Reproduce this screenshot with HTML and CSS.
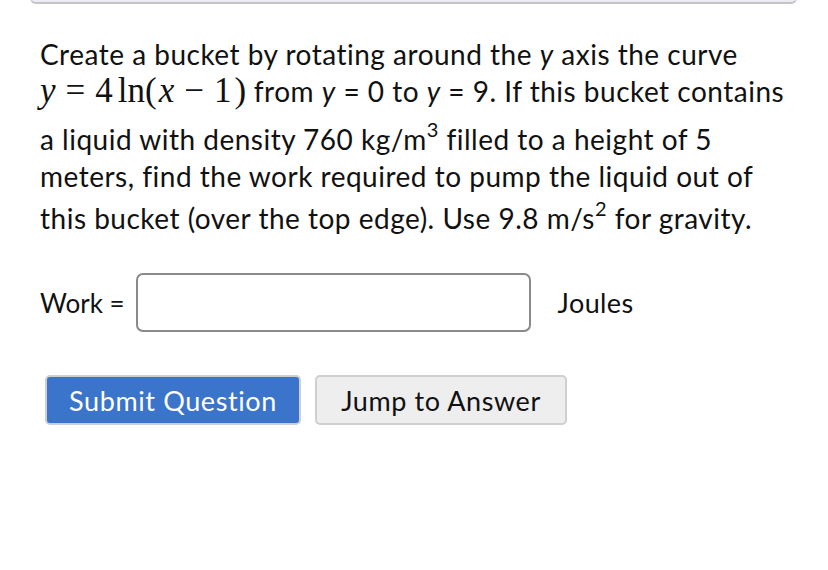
FILE: index.html
```html
<!DOCTYPE html>
<html>
<head>
<meta charset="utf-8">
<link rel="stylesheet" href="styles.css">
</head>
<body>
<div class="page">
  <div class="topbox"></div>
  <div class="question">
    <p class="prompt">Create a bucket by rotating around the <i>y</i> axis the curve <span class="math"><i>y</i><span class="op">=</span>4<span class="fn">ln</span>(<i class="mx">x</i><span class="op">&minus;</span>1<span class="rp">)</span></span> from <i>y</i> = 0 to <i>y</i> = 9. If this bucket contains a liquid with density 760 kg/m<sup>3</sup> filled to a height of 5 meters, find the work required to pump the liquid out of this bucket (over the top edge). Use 9.8 m/s<sup>2</sup> for gravity.</p>
    <div class="answer-row">
      <label class="label" for="work">Work =</label>
      <input class="field" id="work" type="text">
      <span class="unit">Joules</span>
    </div>
    <div class="buttons">
      <button class="btn btn-primary" type="button">Submit Question</button>
      <button class="btn btn-secondary" type="button">Jump to Answer</button>
    </div>
  </div>
</div>
</body>
</html>
```

FILE: styles.css
```css
html, body {
  margin: 0;
  padding: 0;
  background: #ffffff;
}
body {
  font-family: "Lato", "Open Sans", sans-serif;
  color: #111;
  font-variant-ligatures: none;
}
.page {
  width: 828px;
  height: 570px;
  overflow: hidden;
}
.topbox {
  margin: -20px 31px 0 30px;
  height: 22px;
  background: #ececf4;
  border: 1px solid #c8c8c8;
  border-top: none;
  border-bottom: 2px solid #c4c4c4;
  border-radius: 0 0 6px 6px;
}
.question {
  padding: 0 34px 0 40px;
}
.prompt {
  margin: 32px 0 0 0;
  font-size: 28px;
  letter-spacing: 0.5px;
  line-height: 37px;
}
.prompt i {
  font-style: italic;
}
.prompt sup {
  font-size: 20px;
  line-height: 26px;
  vertical-align: 13px;
}
.math {
  display: inline-block;
  font-family: "Liberation Serif", "DejaVu Serif", serif;
  font-size: 35px;
  letter-spacing: 0;
  white-space: nowrap;
  line-height: 35px;
  padding-bottom: 8px;
}
.math i {
  font-style: italic;
}
.math .op {
  margin: 0 10px;
}
.math .fn {
  margin-left: 5px;
}
.math .mx {
  margin-left: 2px;
}
.math .rp {
  margin-left: 3px;
}
.answer-row {
  display: flex;
  align-items: center;
  margin-top: 36px;
  font-size: 27px;
  letter-spacing: 0.4px;
}
.label {
  font-size: 26px;
  letter-spacing: 0;
  margin-right: 11px;
}
.field {
  width: 395px;
  height: 59px;
  box-sizing: border-box;
  border: 2px solid #8a8a8a;
  border-radius: 7px;
  background: #fff;
  font-size: 26px;
}
.unit {
  margin-left: 27px;
}
.buttons {
  display: flex;
  gap: 14px;
  margin-top: 43px;
  margin-left: 5px;
}
.btn {
  font-family: "Lato", "Open Sans", sans-serif;
  font-size: 27px;
  letter-spacing: 0.6px;
  height: 50px;
  padding: 0;
  border-radius: 5px;
  border: 2px solid #cfcfcf;
}
.btn-primary {
  background: #3b74cb;
  color: #fff;
  width: 256px;
}
.btn-secondary {
  background: #eeeeee;
  color: #111;
  width: 252px;
}
```
